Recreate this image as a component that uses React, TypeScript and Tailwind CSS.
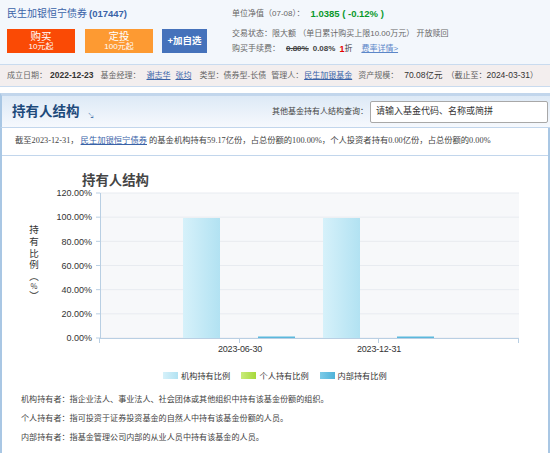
import React from "react";

const sans = "font-['Liberation_Sans','Noto_Sans_CJK_SC',sans-serif]";
const serif = "font-['Liberation_Serif','Noto_Sans_CJK_SC',serif]";

function Chart() {
  const yLabels = ["120.00%", "100.00%", "80.00%", "60.00%", "40.00%", "20.00%", "0.00%"];
  const top = 37;
  const bottom = 182;
  const step = (bottom - top) / 6;
  const vt: [string, number][] = [
    ["持", 74],
    ["有", 86],
    ["比", 97.5],
    ["例", 109],
    ["︵", 121],
    ["%", 130],
    ["︶", 140],
  ];
  return (
    <svg width="546" height="232" viewBox="0 0 546 232" className="block">
      <defs>
        <linearGradient id="g1" x1="0" x2="1" y1="0" y2="0">
          <stop offset="0" stopColor="#d6f1fa" />
          <stop offset="1" stopColor="#b2e2f2" />
        </linearGradient>
        <linearGradient id="g2" x1="0" x2="1" y1="0" y2="0">
          <stop offset="0" stopColor="#c9ec7a" />
          <stop offset="1" stopColor="#a6d83a" />
        </linearGradient>
        <linearGradient id="g3" x1="0" x2="1" y1="0" y2="0">
          <stop offset="0" stopColor="#7ccbe8" />
          <stop offset="1" stopColor="#4fb2d9" />
        </linearGradient>
      </defs>
      <text x="113.5" y="29" textAnchor="middle" fontSize="13.4" fontWeight="bold" fill="#444" fontFamily="Noto Sans CJK SC, sans-serif">持有人结构</text>
      <rect x="98" y={top} width="419" height={bottom - top} fill="#f7f8fa" />
      {yLabels.map((l, i) => (
        <g key={l}>
          <line x1="98" x2="517" y1={top + i * step} y2={top + i * step} stroke="#e8ebf0" strokeWidth="1" />
          <line x1="94" x2="98" y1={top + i * step} y2={top + i * step} stroke="#b9cfe3" strokeWidth="1" />
          <text x="90" y={top + i * step + 3.3} textAnchor="end" fontSize="9" fill="#333" fontFamily="Liberation Sans, sans-serif">{l}</text>
        </g>
      ))}
      <line x1="98.5" x2="98.5" y1={top} y2={bottom} stroke="#b9cfe3" strokeWidth="1" />
      <rect x="181" y={62} width="37" height={bottom - 62} fill="url(#g1)" />
      <rect x="321" y={62} width="37" height={bottom - 62} fill="url(#g1)" />
      <rect x="256" y={bottom - 1.5} width="37" height="1.5" fill="#5bb8dc" />
      <rect x="395" y={bottom - 1.5} width="37" height="1.5" fill="#5bb8dc" />
      <line x1="98" x2="517" y1={bottom + 0.5} y2={bottom + 0.5} stroke="#b9cfe3" strokeWidth="1" />
      {[98, 238, 377, 517].map((x) => (
        <line key={x} x1={x - 0.5} x2={x - 0.5} y1={bottom} y2={bottom + 5} stroke="#b9cfe3" strokeWidth="1" />
      ))}
      <text x="238" y="196" textAnchor="middle" fontSize="9" fill="#333" fontFamily="Liberation Sans, sans-serif" letterSpacing="-0.2">2023-06-30</text>
      <text x="377" y="196" textAnchor="middle" fontSize="9" fill="#333" fontFamily="Liberation Sans, sans-serif" letterSpacing="-0.2">2023-12-31</text>
      {vt.map(([c, y]) => (
        <text key={c} x="32" y={y + 3.3} textAnchor="middle" fontSize={c === "%" ? 7.5 : 9.5} fill="#333" fontFamily="Noto Sans CJK SC, sans-serif">{c}</text>
      ))}
      <rect x="161" y="216" width="15" height="7" fill="url(#g1)" />
      <text x="179" y="222.8" fontSize="8.2" fill="#333" fontFamily="Noto Sans CJK SC, sans-serif">机构持有比例</text>
      <rect x="239" y="216" width="15" height="7" fill="url(#g2)" />
      <text x="257.5" y="222.8" fontSize="8.2" fill="#333" fontFamily="Noto Sans CJK SC, sans-serif">个人持有比例</text>
      <rect x="318" y="216" width="15" height="7" fill="url(#g3)" />
      <text x="335.5" y="222.8" fontSize="8.2" fill="#333" fontFamily="Noto Sans CJK SC, sans-serif">内部持有比例</text>
    </svg>
  );
}

export default function App() {
  return (
    <div className={`w-[550px] h-[453px] overflow-hidden bg-white text-[#333] ${sans}`}>
      {/* header */}
      <div className="flex h-[64px] bg-[#f3f7fc]">
        <div className="w-[232px] pl-[7px] pt-[6px]">
          <div className="h-4 leading-4 text-[10px] text-[#3a63a8] whitespace-nowrap">
            <span>民生加银恒宁债券</span>
            <span className="font-bold ml-[2px] text-[9.5px]">(017447)</span>
          </div>
          <div className="flex mt-[7px] gap-[10px]">
            <div className="w-[68px] h-[24px] bg-[#fa4a05] text-white flex flex-col items-center justify-center">
              <span className="text-[10.5px] leading-[12px]">购买</span>
              <span className="text-[8px] leading-[10px]">10元起</span>
            </div>
            <div className="w-[68px] h-[24px] bg-[#fd9a32] text-white flex flex-col items-center justify-center">
              <span className="text-[10.5px] leading-[12px]">定投</span>
              <span className="text-[8px] leading-[10px]">100元起</span>
            </div>
            <div className="w-[45px] h-[24px] bg-[#4572bb] text-white flex items-center justify-center text-[9.5px] font-bold ml-[-1px]">
              +加自选
            </div>
          </div>
        </div>
        <div className="pt-[6px] text-[8px] text-[#666] whitespace-nowrap">
          <div className="h-4 leading-4 flex items-center">
            <span>单位净值（07-08）：</span>
            <span className="ml-[6px] text-[9.5px] font-bold text-[#0a9a2c]">1.0385 ( -0.12% )</span>
          </div>
          <div className="h-[14px] leading-[14px] mt-[5px]">
            交易状态：限大额 （单日累计购买上限10.00万元） 开放赎回
          </div>
          <div className="h-[14px] leading-[14px] mt-[1px] flex items-center">
            <span>购买手续费：</span>
            <span className="ml-[6px] line-through font-bold text-[#444]">0.80%</span>
            <span className="ml-[4px] font-bold text-[#444]">0.08%</span>
            <span className="ml-[4px] text-[#e60000] font-bold text-[9px]">1</span>
            <span className="text-[#444]">折</span>
            <span className="ml-[9px] text-[#5b86c8] underline">费率详情&gt;</span>
          </div>
        </div>
      </div>
      {/* info row */}
      <div className="h-[23px] bg-[#f3eeee] border-y border-[#c9dbef] flex items-center pl-[7px] text-[8px] text-[#666] whitespace-nowrap">
        <span>成立日期：</span>
        <span className="ml-[3px] font-bold text-[#333] text-[8.5px]">2022-12-23</span>
        <span className="ml-[7px]">基金经理：</span>
        <span className="ml-[6px] text-[#3a63a8] underline">谢志华</span>
        <span className="ml-[5px] text-[#3a63a8] underline">张均</span>
        <span className="ml-[8px]">类型：债券型-长债</span>
        <span className="ml-[5px]">管理人：</span>
        <span className="ml-[1px] text-[#3a63a8] underline">民生加银基金</span>
        <span className="ml-[6px]">资产规模：</span>
        <span className="ml-[6px] text-[#333] text-[8.5px]">70.08亿元</span>
        <span className="ml-[4px] text-[#555]">（截止至：<span className="text-[#333] text-[8.5px]">2024-03-31</span>）</span>
      </div>
      <div className="h-[6px]" />
      {/* section */}
      <div className="border-x-2 border-[#a9c7e4] h-[400px]">
        <div className="h-[35px] border-t-[3px] border-b border-[#c2d6ec] bg-gradient-to-b from-[#dde9f6] to-[#f6f9fd] flex items-center ml-[-2px] mr-[-2px] border-l-2 border-l-[#a9c7e4]">
          <span className="ml-[10px] text-[13.5px] font-bold text-[#1d4a7b] leading-none">持有人结构</span>
          <span className="ml-[8px] mt-[7px] text-[7px] text-[#4a76aa] leading-none">↘</span>
          <span className={`ml-auto text-[8px] text-[#444] ${serif}`}>其他基金持有人结构查询：</span>
          <div className="ml-[2px] mr-[2px] w-[178px] h-[22px] bg-white border border-[#a8a8a8] rounded-[2px] flex items-center pl-[5px] text-[9px] text-[#333]">
            请输入基金代码、名称或简拼
          </div>
        </div>
        <div className={`h-[28px] border-b border-[#c2d6ec] bg-white flex items-center pl-[13px] text-[8.3px] text-[#444] whitespace-nowrap ${serif}`}>
          截至2023-12-31，<span className="mx-[2px] text-[#3a63a8] underline">民生加银恒宁债券</span> 的基金机构持有59.17亿份，占总份额的100.00%，个人投资者持有0.00亿份，占总份额的0.00%
        </div>
        <Chart />
        <div className={`pl-[19px] pt-[2px] text-[8.1px] text-[#444] flex flex-col leading-[19px] ${serif}`}>
          <div>机构持有者：指企业法人、事业法人、社会团体或其他组织中持有该基金份额的组织。</div>
          <div>个人持有者：指可投资于证券投资基金的自然人中持有该基金份额的人员。</div>
          <div>内部持有者：指基金管理公司内部的从业人员中持有该基金的人员。</div>
        </div>
      </div>
    </div>
  );
}
